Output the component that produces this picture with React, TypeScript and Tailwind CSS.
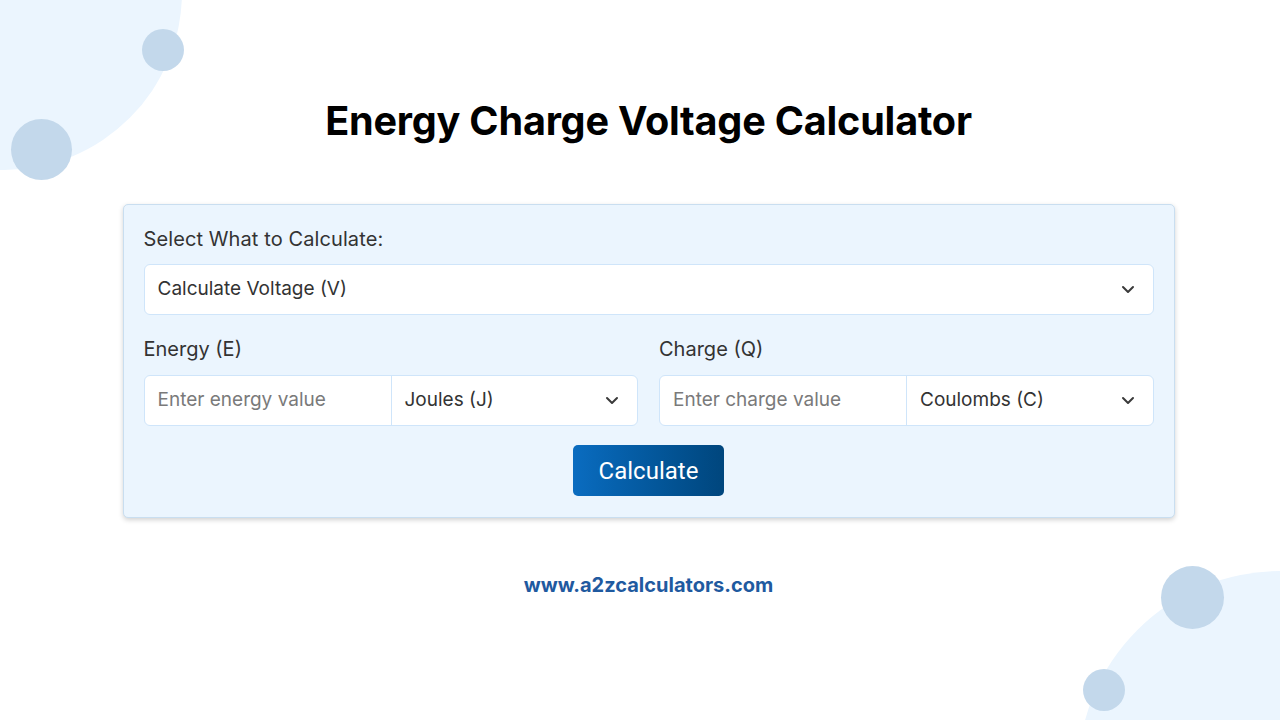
import { useState } from 'react';

const font = { fontFamily: 'Inter, "Noto Sans", sans-serif' };

const Chevron = () => (
  <svg width="14" height="9" viewBox="0 0 14 9" fill="none" className="shrink-0">
    <path d="M2 2l5 5 5-5" stroke="#3a3a3a" strokeWidth="2" strokeLinecap="round" strokeLinejoin="round" />
  </svg>
);

const UnitField = ({ placeholder, unit }: { placeholder: string; unit: string }) => (
  <div className="flex h-[51px] rounded-[6px] border border-[#cfe5fa] bg-white">
    <input
      placeholder={placeholder}
      className="w-[247px] shrink-0 border-r border-[#cfe5fa] bg-transparent px-[13px] text-[19px] text-[#333] outline-none placeholder:text-[#7a7a7a]"
    />
    <div className="flex flex-1 items-center justify-between pl-[13px] pr-[18px] text-[19px] text-[#333]">
      <span>{unit}</span>
      <Chevron />
    </div>
  </div>
);

export default function App() {
  const [mode] = useState('Calculate Voltage (V)');

  return (
    <div className="relative h-[720px] w-full overflow-hidden bg-white" style={font}>
      {/* corner decorations */}
      <div className="absolute left-[-174px] top-[-186px] h-[356px] w-[356px] rounded-full bg-[#ebf5fe]" />
      <div className="absolute left-[142px] top-[29px] h-[42px] w-[42px] rounded-full bg-[#c3d8eb]" />
      <div className="absolute left-[11px] top-[119px] h-[61px] w-[61px] rounded-full bg-[#c3d8eb]" />
      <div className="absolute left-[1078px] top-[571px] h-[404px] w-[404px] rounded-full bg-[#ebf5fe]" />
      <div className="absolute left-[1161px] top-[566px] h-[63px] w-[63px] rounded-full bg-[#c3d8eb]" />
      <div className="absolute left-[1083px] top-[669px] h-[42px] w-[42px] rounded-full bg-[#c3d8eb]" />

      <div className="relative flex flex-col items-center pl-[17px] pt-[97px]">
        <h1 className="text-[39.6px] font-bold leading-[48px] tracking-[-0.2px] text-black">
          Energy Charge Voltage Calculator
        </h1>

        <div className="mt-[59px] w-[1052px] rounded-[5px] border border-[#c9def0] bg-[#ebf5fe] px-[20px] pb-[21px] pt-[21px] shadow-[0_2px_5px_rgba(0,0,0,0.18)]">
          <div className="text-[20px] leading-[27px] tracking-[0.1px] text-[#333]">Select What to Calculate:</div>
          <div className="mt-[11px] flex h-[51px] items-center justify-between rounded-[6px] border border-[#cfe5fa] bg-white pl-[13px] pr-[18px] text-[19px] text-[#333]">
            <span>{mode}</span>
            <Chevron />
          </div>

          <div className="mt-[21px] grid grid-cols-2 gap-[21px]">
            <div>
              <div className="text-[20px] leading-[27px] text-[#333]">Energy (E)</div>
              <div className="mt-[12px]">
                <UnitField placeholder="Enter energy value" unit="Joules (J)" />
              </div>
            </div>
            <div>
              <div className="text-[20px] leading-[27px] text-[#333]">Charge (Q)</div>
              <div className="mt-[12px]">
                <UnitField placeholder="Enter charge value" unit="Coulombs (C)" />
              </div>
            </div>
          </div>

          <div className="mt-[19px] flex justify-center">
            <button
              className="h-[51px] w-[151px] rounded-[5px] bg-gradient-to-r from-[#0a6cc0] to-[#00467d] text-[24px] text-white"
              style={{ fontFamily: 'Roboto, "Liberation Sans", sans-serif' }}
            >
              Calculate
            </button>
          </div>
        </div>

        <div className="mt-[53px] text-[20px] font-bold leading-[28px] text-[#1f5aa0]">
          www.a2zcalculators.com
        </div>
      </div>
    </div>
  );
}
